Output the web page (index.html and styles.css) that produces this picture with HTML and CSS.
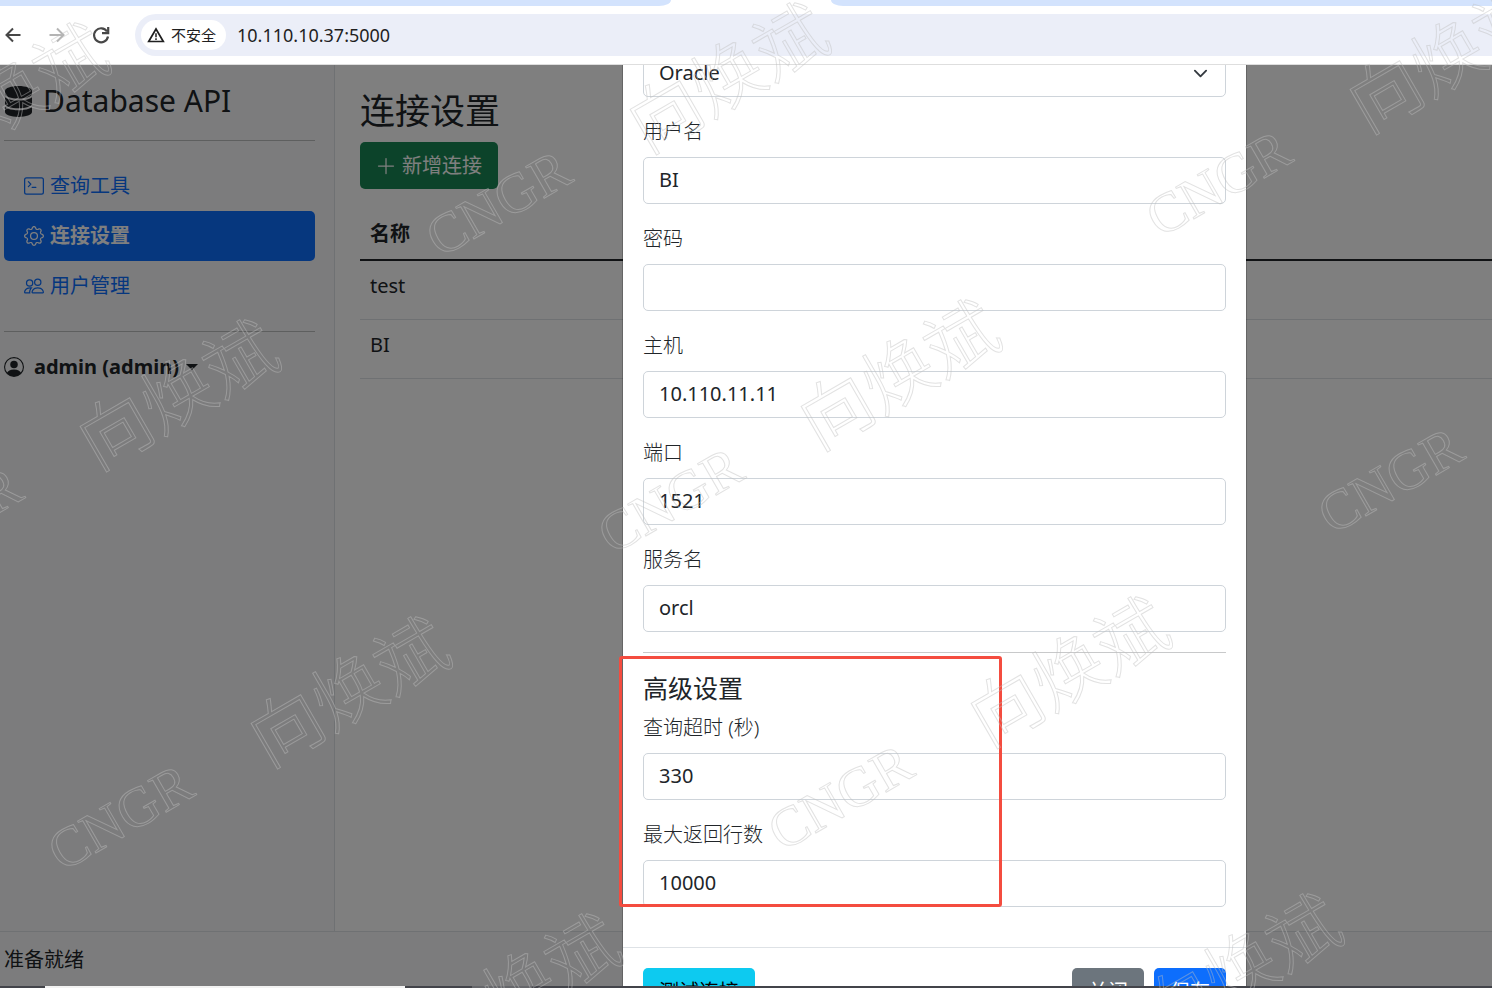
FILE: index.html
```html
<!DOCTYPE html>
<html lang="zh-CN">
<head>
<meta charset="utf-8">
<title>Database API</title>
<link rel="stylesheet" href="styles.css">
</head>
<body>
<header class="browser">
  <div class="tabs"><div class="tab-left"></div><div class="tab-right"></div></div>
  <div class="toolbar">
    <button class="tool" type="button" aria-label="后退"><svg viewBox="0 0 20 20" width="20" height="20"><path d="M17.5 10H4M10 3.5 3.5 10l6.500 6.500" fill="none" stroke="#474747" stroke-width="2"/></svg></button>
    <button class="tool" type="button" aria-label="前进"><svg viewBox="0 0 20 20" width="20" height="20"><path d="M2.500 10H16M10 3.500l6.500 6.500-6.500 6.500" fill="none" stroke="#b4b4b4" stroke-width="2"/></svg></button>
    <button class="tool" type="button" aria-label="刷新"><svg viewBox="0 0 20 20" width="20" height="20"><path d="M16 6.500A7 7 0 1 0 17 11.500M17.200 2v6.200H11" fill="none" stroke="#474747" stroke-width="2.200"/></svg></button>
    <div class="omnibox">
      <button class="security" type="button"><svg viewBox="0 0 18 16" width="18" height="16"><path d="M9 2 1.700 14.500h14.600z" fill="none" stroke="#1f1f1f" stroke-width="1.700"/><path d="M9 6.300v4M9 11.300v1.600" stroke="#1f1f1f" stroke-width="1.500"/></svg>不安全</button>
      <input class="url" type="text" aria-label="地址" value="10.110.10.37:5000">
    </div>
  </div>
</header>

<div class="viewport">
  <div class="app">
    <div class="columns">
      <nav class="sidebar">
        <h1 class="brand"><svg viewBox="0 0 448 512" width="27" height="31" fill="currentColor"><path d="M448 80v48c0 44.200-100.300 80-224 80S0 172.200 0 128V80C0 35.800 100.300 0 224 0s224 35.800 224 80zM393.200 214.700c20.800-7.400 39.900-16.900 54.800-28.600V288c0 44.200-100.300 80-224 80S0 332.200 0 288V186.100c14.900 11.800 34 21.200 54.800 28.600C99.700 230.700 159.500 240 224 240s124.300-9.300 169.200-25.300zM0 346.100c14.900 11.800 34 21.200 54.800 28.600C99.700 390.700 159.500 400 224 400s124.300-9.300 169.200-25.300c20.800-7.400 39.900-16.900 54.800-28.600V432c0 44.200-100.300 80-224 80S0 476.200 0 432v-85.900z"/></svg>Database API</h1>
        <hr class="rule">
        <a class="nav-link" href="#query"><svg viewBox="0 0 16 16" width="20" height="20" fill="currentColor"><path d="M6 9a.5.5 0 0 1 .5-.5h3a.5.5 0 0 1 0 1h-3A.5.5 0 0 1 6 9M3.854 4.146a.5.5 0 1 0-.708.708L4.793 6.500 3.146 8.146a.5.5 0 1 0 .708.708l2-2a.5.5 0 0 0 0-.708z"/><path d="M2 1a2 2 0 0 0-2 2v10a2 2 0 0 0 2 2h12a2 2 0 0 0 2-2V3a2 2 0 0 0-2-2zm12 1a1 1 0 0 1 1 1v10a1 1 0 0 1-1 1H2a1 1 0 0 1-1-1V3a1 1 0 0 1 1-1z"/></svg>查询工具</a>
        <a class="nav-link active" href="#connections"><svg viewBox="0 0 16 16" width="20" height="20" fill="currentColor"><path d="M8 4.754a3.246 3.246 0 1 0 0 6.492 3.246 3.246 0 0 0 0-6.492M5.754 8a2.246 2.246 0 1 1 4.492 0 2.246 2.246 0 0 1-4.492 0"/><path d="M9.796 1.343c-.527-1.790-3.065-1.790-3.592 0l-.094.319a.873.873 0 0 1-1.255.520l-.292-.160c-1.640-.892-3.433.902-2.540 2.541l.159.292a.873.873 0 0 1-.520 1.255l-.319.094c-1.790.527-1.790 3.065 0 3.592l.319.094a.873.873 0 0 1 .520 1.255l-.160.292c-.892 1.640.901 3.434 2.541 2.540l.292-.159a.873.873 0 0 1 1.255.520l.094.319c.527 1.790 3.065 1.790 3.592 0l.094-.319a.873.873 0 0 1 1.255-.520l.292.160c1.640.893 3.434-.902 2.540-2.541l-.159-.292a.873.873 0 0 1 .520-1.255l.319-.094c1.790-.527 1.790-3.065 0-3.592l-.319-.094a.873.873 0 0 1-.520-1.255l.160-.292c.893-1.640-.902-3.433-2.541-2.540l-.292.159a.873.873 0 0 1-1.255-.520zm-2.633.283c.246-.835 1.428-.835 1.674 0l.094.319a1.873 1.873 0 0 0 2.693 1.115l.291-.160c.764-.415 1.600.420 1.184 1.185l-.159.292a1.873 1.873 0 0 0 1.116 2.692l.318.094c.835.246.835 1.428 0 1.674l-.319.094a1.873 1.873 0 0 0-1.115 2.693l.160.291c.415.764-.420 1.600-1.185 1.184l-.291-.159a1.873 1.873 0 0 0-2.693 1.116l-.094.318c-.246.835-1.428.835-1.674 0l-.094-.319a1.873 1.873 0 0 0-2.692-1.115l-.292.160c-.764.415-1.600-.420-1.184-1.185l.159-.291A1.873 1.873 0 0 0 1.945 8.930l-.319-.094c-.835-.246-.835-1.428 0-1.674l.319-.094A1.873 1.873 0 0 0 3.060 4.377l-.160-.292c-.415-.764.420-1.600 1.185-1.184l.292.159a1.873 1.873 0 0 0 2.692-1.115z"/></svg>连接设置</a>
        <a class="nav-link" href="#users"><svg viewBox="0 0 16 16" width="20" height="20" fill="currentColor"><path d="M15 14s1 0 1-1-1-4-5-4-5 3-5 4 1 1 1 1zm-7.978-1L7 12.996c.001-.264.167-1.030.760-1.720C8.312 10.629 9.282 10 11 10c1.717 0 2.687.630 3.240 1.276.593.690.758 1.457.760 1.720l-.008.002-.014.002zM11 7a2 2 0 1 0 0-4 2 2 0 0 0 0 4m3-2a3 3 0 1 1-6 0 3 3 0 0 1 6 0M6.936 9.280a6 6 0 0 0-1.230-.247A7 7 0 0 0 5 9c-4 0-5 3-5 4q0 1 1 1h4.216A2.240 2.240 0 0 1 5 13c0-1.010.377-2.042 1.090-2.904.243-.294.526-.569.846-.816M4.920 10A5.500 5.500 0 0 0 4 13H1c0-.260.164-1.030.760-1.724.545-.636 1.492-1.256 3.160-1.275ZM1.500 5.500a3 3 0 1 1 6 0 3 3 0 0 1-6 0m3-2a2 2 0 1 0 0 4 2 2 0 0 0 0-4"/></svg>用户管理</a>
        <hr class="rule">
        <button class="account" type="button"><svg viewBox="0 0 16 16" width="20" height="20" fill="currentColor"><path d="M11 6a3 3 0 1 1-6 0 3 3 0 0 1 6 0"/><path fill-rule="evenodd" d="M0 8a8 8 0 1 1 16 0A8 8 0 0 1 0 8m8-7a7 7 0 0 0-5.468 11.370C3.242 11.226 4.805 10 8 10s4.757 1.225 5.468 2.370A7 7 0 0 0 8 1"/></svg><span>admin (admin)</span><i class="caret"></i></button>
      </nav>
      <main class="content">
        <h2 class="title">连接设置</h2>
        <button class="add" type="button"><svg viewBox="0 0 16 16" width="20" height="20"><path d="M8 2v12M2 8h12" stroke="currentColor" stroke-width="1" stroke-linecap="round"/></svg>新增连接</button>
        <table class="table">
          <thead><tr><th>名称</th></tr></thead>
          <tbody><tr><td>test</td></tr><tr><td>BI</td></tr></tbody>
        </table>
      </main>
    </div>
    <footer class="status">准备就绪</footer>
  </div>

  <div class="backdrop">
    <form class="modal">
      <div class="modal-body">
        <div class="select-wrap field">
          <select class="control" aria-label="类型"><option>Oracle</option></select>
          <svg class="chevron" viewBox="0 0 16 16" width="15" height="15"><path d="m2 5 6 6 6-6" fill="none" stroke="#343a40" stroke-width="2" stroke-linecap="round" stroke-linejoin="round"/></svg>
        </div>
        <div class="field"><label for="user">用户名</label><input class="control" id="user" type="text" value="BI"></div>
        <div class="field"><label for="pass">密码</label><input class="control" id="pass" type="password"></div>
        <div class="field"><label for="host">主机</label><input class="control" id="host" type="text" value="10.110.11.11"></div>
        <div class="field"><label for="port">端口</label><input class="control" id="port" type="text" value="1521"></div>
        <div class="field"><label for="service">服务名</label><input class="control" id="service" type="text" value="orcl"></div>
        <hr class="divider">
        <section class="advanced">
          <h3>高级设置</h3>
          <div class="field"><label for="timeout">查询超时 (秒)</label><input class="control" id="timeout" type="text" value="330"></div>
          <div class="field"><label for="rows">最大返回行数</label><input class="control" id="rows" type="text" value="10000"></div>
          <div class="highlight"></div>
        </section>
      </div>
      <div class="modal-footer">
        <button class="btn info" type="button">测试连接</button>
        <button class="btn secondary" type="button">关闭</button>
        <button class="btn primary" type="submit">保存</button>
      </div>
    </form>
  </div>
</div>
<div class="taskbar"><div class="task-active"></div><div class="task-idle"></div></div>

<svg class="watermark" aria-hidden="true">
  <g class="mark-name">
    <text transform="translate(5 93) rotate(-30)">向焕斌</text>
    <text transform="translate(725 73) rotate(-30)">向焕斌</text>
    <text transform="translate(1445 53) rotate(-30)">向焕斌</text>
    <text transform="translate(175 390) rotate(-30)">向焕斌</text>
    <text transform="translate(896 370) rotate(-30)">向焕斌</text>
    <text transform="translate(346 687) rotate(-30)">向焕斌</text>
    <text transform="translate(1066 667) rotate(-30)">向焕斌</text>
    <text transform="translate(517 984) rotate(-30)">向焕斌</text>
    <text transform="translate(1238 964) rotate(-30)">向焕斌</text>
  </g>
  <g class="mark-org">
    <text transform="translate(498 203) rotate(-30)">CNGR</text>
    <text transform="translate(1218 183) rotate(-30)">CNGR</text>
    <text transform="translate(-51 520) rotate(-30)">CNGR</text>
    <text transform="translate(670 500) rotate(-30)">CNGR</text>
    <text transform="translate(1390 480) rotate(-30)">CNGR</text>
    <text transform="translate(120 817) rotate(-30)">CNGR</text>
    <text transform="translate(840 797) rotate(-30)">CNGR</text>
  </g>
</svg>
</body>
</html>
```

FILE: styles.css
```css
* { box-sizing: border-box; }

body {
  margin: 0;
  height: 100vh;
  display: flex;
  flex-direction: column;
  position: relative;
  overflow: hidden;
  background: #fff;
  color: #212529;
  font: 20px/30px "Noto Sans", "Noto Sans CJK SC", sans-serif;
}

button, input, select { font: inherit; color: inherit; }
button { cursor: pointer; }
svg { display: block; flex: none; }
h1, h2, h3 { font-weight: 400; margin: 0; }

/* Browser chrome */
.browser { border-bottom: 1px solid #dedede; flex: none; }
.tabs { display: flex; justify-content: space-between; height: 6px; }
.tab-left { width: 45%; background: #d3e3fd; border-bottom-right-radius: 12px 6px; }
.tab-right { width: 661px; background: #d3e3fd; border-bottom-left-radius: 12px 6px; }
.toolbar { display: flex; align-items: center; padding: 8px 0 8px 3px; }
.tool { border: 0; background: none; padding: 0; margin-right: 24px; }
.omnibox {
  flex: 1;
  display: flex;
  align-items: center;
  gap: 11px;
  height: 42px;
  padding-left: 6px;
  background: #ebeef8;
  border-radius: 21px 0 0 21px;
}
.security {
  display: flex;
  align-items: center;
  gap: 6px;
  height: 30px;
  padding: 0 10px 0 6px;
  border: 0;
  border-radius: 15px;
  background: #fff;
  color: #1f1f1f;
  font-size: 15px;
}
.url { flex: 1; border: 0; padding: 0; background: none; color: #1f1f1f; font-size: 18px; outline: 0; }

/* Application */
.viewport { flex: 1; min-height: 0; position: relative; overflow: hidden; }
.app { height: 100%; display: flex; flex-direction: column; }
.columns { flex: 1; display: flex; min-height: 0; }
.sidebar {
  width: 335px;
  flex: none;
  padding: 17px 19px 0 4px;
  background: #f8f9fa;
  border-right: 1px solid #dee2e6;
}
.brand { display: flex; align-items: center; gap: 11px; padding-left: 1px; font-size: 30px; line-height: 38px; }
.rule { margin: 20px 0; border: 0; border-top: 1px solid #bcbebf; }
.nav-link {
  display: flex;
  align-items: center;
  gap: 6px;
  padding: 10px 20px;
  border-radius: 5px;
  color: #0d6efd;
  text-decoration: none;
}
.nav-link.active { background: #0d6efd; color: #fff; font-weight: 700; }
.account {
  display: flex;
  align-items: center;
  gap: 10px;
  padding: 0;
  border: 0;
  background: none;
  font-weight: 700;
}
.caret { border: 6px solid transparent; border-top-color: currentColor; border-bottom: 0; margin-left: -3px; }

.content { flex: 1; padding: 25px 0 0 25px; }
.title { font-size: 35px; line-height: 42px; margin-bottom: 10px; }
.add {
  display: flex;
  align-items: center;
  gap: 6px;
  height: 47px;
  padding: 0 16px;
  border: 0;
  border-radius: 5px;
  background: #198754;
  color: #fff;
}
.table { width: 100%; margin-top: 20px; border-collapse: separate; border-spacing: 0; }
.table th { padding: 10px; text-align: left; border-bottom: 2px solid #212529; }
.table td { height: 59px; padding: 10px; vertical-align: top; border-bottom: 1px solid #dee2e6; }

.status { flex: none; height: 55px; padding: 13px 4px; background: #f8f9fa; border-top: 1px solid #dee2e6; }

/* Modal */
.backdrop { position: absolute; inset: 0; overflow: hidden; background: rgba(0, 0, 0, .5); }
.modal {
  width: 625px;
  margin: -35px 0 0 622px;
  background: #fff;
  background-clip: padding-box;
  border: 1px solid rgba(0, 0, 0, .2);
  border-top: 0;
}
.modal-body { padding: 20px; }
.field { margin-bottom: 20px; }
.field label { display: block; margin-bottom: 10px; font-weight: 300; }
.control {
  display: block;
  width: 100%;
  height: 47px;
  padding: 0 15px 2px;
  border: 1px solid #ced4da;
  border-radius: 5px;
  background: #fff;
  outline: 0;
  appearance: none;
}
.select-wrap { display: grid; align-items: center; }
.select-wrap > * { grid-area: 1 / 1; }
.chevron { justify-self: end; margin-right: 18px; pointer-events: none; }
.divider { margin: 20px 0; border: 0; border-top: 1px solid #c8c9ca; }
.advanced { position: relative; }
.advanced h3 { font-size: 25px; line-height: 30px; margin-bottom: 10px; }
.highlight {
  position: absolute;
  inset: -17px 224px 0 -24px;
  border: 3px solid #f44c3f;
  border-radius: 3px;
  pointer-events: none;
}
.modal-footer { display: flex; gap: 10px; padding: 20px; border-top: 1px solid #dee2e6; }
.btn { height: 47px; padding: 0 16px; border: 0; border-radius: 5px; color: #fff; }
.info { background: #0dcaf0; color: #000; margin-right: auto; }
.secondary { background: #6c757d; }
.primary { background: #0d6efd; }

.taskbar { flex: none; display: flex; height: 2px; padding-left: 45px; gap: 67px; background: #43444a; }
.task-active { width: 360px; background: #f2f2f2; }
.task-idle { width: 60px; background: #66676b; }

/* Repeating outline text over the whole window */
.watermark { position: absolute; inset: 0; width: 100%; height: 100%; pointer-events: none; }
.watermark text { fill: none; stroke: rgba(190, 190, 190, .45); stroke-width: 1px; text-anchor: middle; dominant-baseline: central; }
.mark-name { font-family: "Noto Sans CJK SC", sans-serif; font-size: 72px; font-weight: 300; }
.mark-org { font-family: "Liberation Serif", serif; font-size: 56px; }
```
